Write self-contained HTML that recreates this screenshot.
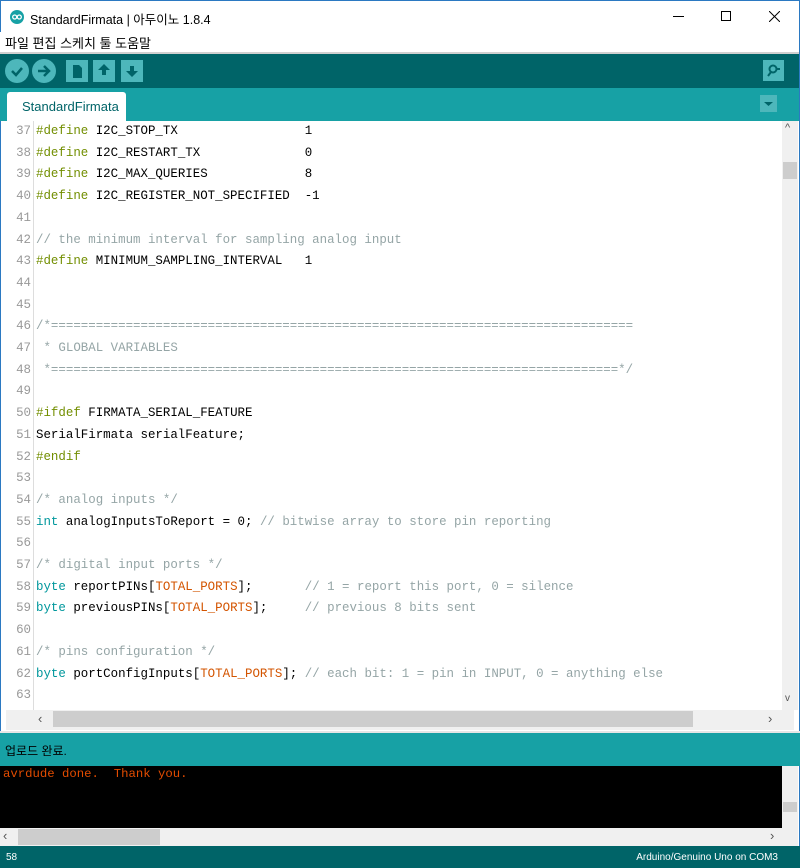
<!DOCTYPE html>
<html><head><meta charset="utf-8"><style>
*{margin:0;padding:0;box-sizing:border-box}
body{width:800px;height:868px;overflow:hidden;background:#fff;font-family:"Liberation Sans","Noto Sans CJK KR",sans-serif;position:relative}
.abs{position:absolute}
.title{left:0;top:0;width:800px;height:32px;background:#fff;border:1px solid #2b79c2;border-bottom:none}
.menu{left:0;top:32px;width:800px;height:20px;font-size:13px;color:#000}
.tool{left:0;top:52px;width:800px;height:36px;background:#006468;border-top:2px solid #d0d0d0}
.tabs{left:0;top:88px;width:800px;height:33px;background:#17a1a5}
.ed{left:6px;top:121px;width:776px;height:589px;background:#fff;overflow:hidden}
.code{position:absolute;left:30px;top:0;font-family:"Liberation Mono","Noto Sans CJK KR",monospace;font-size:12.45px;line-height:21.7px;white-space:pre;color:#000}
.nums{position:absolute;left:0;top:0;width:25px;text-align:right;font-family:"Liberation Mono",monospace;font-size:12.45px;line-height:21.7px;color:#999;white-space:pre}
.k{color:#728e00}.t{color:#00979c}.c{color:#95a5a6}.o{color:#d35400}
.btn{position:absolute;background:#4db7bb}
</style></head><body>
<div class="abs title">
 <svg class="abs" style="left:9px;top:9px" width="14" height="14"><circle cx="7" cy="7" r="7" fill="#17a1a5"/><circle cx="4.7" cy="7" r="2" fill="none" stroke="#fff" stroke-width="1.3"/><circle cx="9.3" cy="7" r="2" fill="none" stroke="#fff" stroke-width="1.3"/></svg>
 <div class="abs" style="left:29px;top:8px;font-size:12.5px">StandardFirmata | 아두이노 1.8.4</div>
 <div class="abs" style="left:672px;top:15px;width:11px;height:1px;background:#000"></div>
 <div class="abs" style="left:720px;top:10px;width:10px;height:10px;border:1px solid #000"></div>
 <svg class="abs" style="left:768px;top:10px" width="11" height="11"><path d="M0 0L11 11M11 0L0 11" stroke="#000" stroke-width="1"/></svg>
</div>
<div class="abs menu"><span class="abs" style="left:5px;top:1px">파일 편집 스케치 툴 도움말</span></div>
<div class="abs tool">
 <div class="btn" style="left:5px;top:5px;width:24px;height:24px;border-radius:50%"></div>
 <svg class="abs" style="left:5px;top:5px" width="24" height="24"><path d="M7 12l4 4 6-7" fill="none" stroke="#006468" stroke-width="2.5"/></svg>
 <div class="btn" style="left:32px;top:5px;width:24px;height:24px;border-radius:50%"></div>
 <svg class="abs" style="left:32px;top:5px" width="24" height="24"><path d="M6 12h10M12 7l5 5-5 5" fill="none" stroke="#006468" stroke-width="2.5"/></svg>
 <div class="btn" style="left:66px;top:6px;width:22px;height:22px"></div>
 <svg class="abs" style="left:66px;top:6px" width="22" height="22"><path d="M7 5h6l3 3v10H7z" fill="#006468"/></svg>
 <div class="btn" style="left:93px;top:6px;width:22px;height:22px"></div>
 <svg class="abs" style="left:93px;top:6px" width="22" height="22"><path d="M11 4l6 6h-4v5H9v-5H5z" fill="#006468"/></svg>
 <div class="btn" style="left:121px;top:6px;width:22px;height:22px"></div>
 <svg class="abs" style="left:121px;top:6px" width="22" height="22"><path d="M11 17l6-6h-4V6H9v5H5z" fill="#006468"/></svg>
 <div class="btn" style="left:763px;top:6px;width:21px;height:21px"></div>
 <svg class="abs" style="left:763px;top:6px" width="21" height="21"><circle cx="10" cy="9" r="3.5" fill="none" stroke="#006468" stroke-width="2"/><path d="M8 12l-3 4M14 9h3" stroke="#006468" stroke-width="2"/></svg>
</div>
<div class="abs tabs">
 <div class="abs" style="left:7px;top:4px;width:119px;height:29px;background:#fff;border-radius:3px 3px 0 0;font-size:13px;color:#006468;padding:7px 0 0 15px">StandardFirmata</div>
 <div class="abs" style="left:760px;top:7px;width:17px;height:17px;background:#4db7bb"></div>
 <svg class="abs" style="left:760px;top:7px" width="17" height="17"><path d="M4 7h9l-4.5 4z" fill="#006468"/></svg>
</div>
<div class="abs" style="left:0;top:121px;width:6px;height:610px;background:#fff;border-left:1px solid #2b79c2"></div>
<div class="abs" style="left:794px;top:0;width:6px;height:868px;border-right:1px solid #2b79c2"></div>
<div class="abs ed">
 <div class="abs" style="left:27px;top:0;width:1px;height:589px;background:#ddd"></div>
<div class="nums">37
38
39
40
41
42
43
44
45
46
47
48
49
50
51
52
53
54
55
56
57
58
59
60
61
62
63</div>
<div class="code"><span class="k">#define</span> I2C_STOP_TX                 1
<span class="k">#define</span> I2C_RESTART_TX              0
<span class="k">#define</span> I2C_MAX_QUERIES             8
<span class="k">#define</span> I2C_REGISTER_NOT_SPECIFIED  -1

<span class="c">// the minimum interval for sampling analog input</span>
<span class="k">#define</span> MINIMUM_SAMPLING_INTERVAL   1


<span class="c">/*==============================================================================
 * GLOBAL VARIABLES
 *============================================================================*/</span>

<span class="k">#ifdef</span> FIRMATA_SERIAL_FEATURE
SerialFirmata serialFeature;
<span class="k">#endif</span>

<span class="c">/* analog inputs */</span>
<span class="t">int</span> analogInputsToReport = 0; <span class="c">// bitwise array to store pin reporting</span>

<span class="c">/* digital input ports */</span>
<span class="t">byte</span> reportPINs[<span class="o">TOTAL_PORTS</span>];       <span class="c">// 1 = report this port, 0 = silence</span>
<span class="t">byte</span> previousPINs[<span class="o">TOTAL_PORTS</span>];     <span class="c">// previous 8 bits sent</span>

<span class="c">/* pins configuration */</span>
<span class="t">byte</span> portConfigInputs[<span class="o">TOTAL_PORTS</span>]; <span class="c">// each bit: 1 = pin in INPUT, 0 = anything else</span>
</div>
</div>
<div class="abs" style="left:782px;top:121px;width:16px;height:589px;background:#f0f0f0"></div>
<div class="abs" style="left:783px;top:162px;width:14px;height:17px;background:#cdcdcd"></div>
<div class="abs" style="left:785px;top:122px;font-size:11px;color:#555">^</div>
<div class="abs" style="left:785px;top:693px;font-size:10px;color:#555">v</div>
<div class="abs" style="left:6px;top:710px;width:788px;height:20px;background:#f0f0f0"></div>
<div class="abs" style="left:53px;top:711px;width:640px;height:16px;background:#cdcdcd"></div>
<div class="abs" style="left:38px;top:711px;font-size:13px;color:#555">‹</div>
<div class="abs" style="left:768px;top:711px;font-size:13px;color:#555">›</div>
<div class="abs" style="left:0;top:731px;width:800px;height:35px;background:#17a1a5;border-top:2px solid #e6e6e6"></div>
<div class="abs" style="left:5px;top:742px;font-size:12px;color:#000">업로드 완료.</div>
<div class="abs" style="left:0;top:766px;width:782px;height:62px;background:#000"></div>
<div class="abs" style="left:3px;top:767px;font-family:'Liberation Mono',monospace;font-size:12.3px;color:#e34c00;white-space:pre">avrdude done.  Thank you.</div>
<div class="abs" style="left:782px;top:766px;width:16px;height:62px;background:#f0f0f0"></div>
<div class="abs" style="left:783px;top:802px;width:14px;height:10px;background:#cdcdcd"></div>
<div class="abs" style="left:0;top:828px;width:798px;height:18px;background:#f0f0f0"></div>
<div class="abs" style="left:18px;top:829px;width:142px;height:16px;background:#cdcdcd"></div>
<div class="abs" style="left:3px;top:828px;font-size:13px;color:#555">‹</div>
<div class="abs" style="left:770px;top:828px;font-size:13px;color:#555">›</div>
<div class="abs" style="left:0;top:846px;width:800px;height:22px;background:#006468"></div>
<div class="abs" style="left:6px;top:852px;font-size:10px;color:#fff">58</div>
<div class="abs" style="right:22px;top:852px;font-size:10px;color:#fff">Arduino/Genuino Uno on COM3</div>
</body></html>
